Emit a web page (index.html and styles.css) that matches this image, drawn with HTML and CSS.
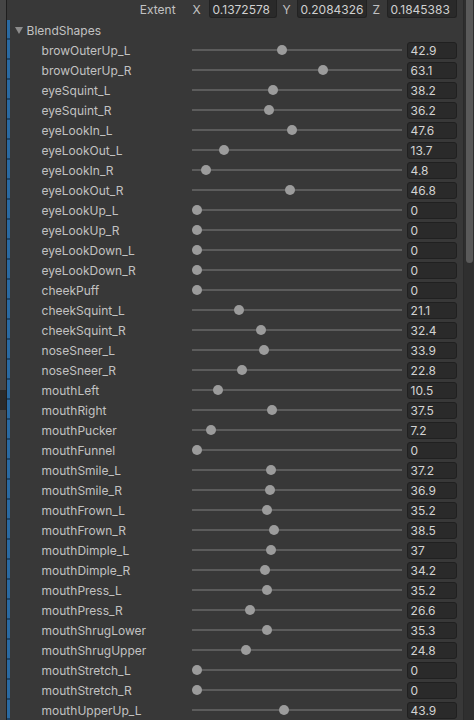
FILE: index.html
```html
<!DOCTYPE html>
<html>
<head>
<meta charset="utf-8">
<link rel="stylesheet" href="styles.css">
</head>
<body>
<div class="page">
  <div class="side"><div class="side-dark"></div></div>
  <div class="divider"></div>
  <div class="main">
    <div class="extent">
      <span class="ext-label">Extent</span>
      <span class="axis axis-first">X</span><span class="efield efield-first">0.1372578</span>
      <span class="axis">Y</span><span class="efield">0.2084326</span>
      <span class="axis">Z</span><span class="efield">0.1845383</span>
    </div>
    <div class="group">
      <div class="bar"></div>
      <div class="rows">
        <div class="header"><span class="tri"></span><span>BlendShapes</span></div>
        <div class="row"><span class="label">browOuterUp_L</span><div class="slider" style="--v:42.9"><i></i></div><span class="field">42.9</span></div>
        <div class="row"><span class="label">browOuterUp_R</span><div class="slider" style="--v:63.1"><i></i></div><span class="field">63.1</span></div>
        <div class="row"><span class="label">eyeSquint_L</span><div class="slider" style="--v:38.2"><i></i></div><span class="field">38.2</span></div>
        <div class="row"><span class="label">eyeSquint_R</span><div class="slider" style="--v:36.2"><i></i></div><span class="field">36.2</span></div>
        <div class="row"><span class="label">eyeLookIn_L</span><div class="slider" style="--v:47.6"><i></i></div><span class="field">47.6</span></div>
        <div class="row"><span class="label">eyeLookOut_L</span><div class="slider" style="--v:13.7"><i></i></div><span class="field">13.7</span></div>
        <div class="row"><span class="label">eyeLookIn_R</span><div class="slider" style="--v:4.8"><i></i></div><span class="field">4.8</span></div>
        <div class="row"><span class="label">eyeLookOut_R</span><div class="slider" style="--v:46.8"><i></i></div><span class="field">46.8</span></div>
        <div class="row"><span class="label">eyeLookUp_L</span><div class="slider" style="--v:0"><i></i></div><span class="field">0</span></div>
        <div class="row"><span class="label">eyeLookUp_R</span><div class="slider" style="--v:0"><i></i></div><span class="field">0</span></div>
        <div class="row"><span class="label">eyeLookDown_L</span><div class="slider" style="--v:0"><i></i></div><span class="field">0</span></div>
        <div class="row"><span class="label">eyeLookDown_R</span><div class="slider" style="--v:0"><i></i></div><span class="field">0</span></div>
        <div class="row"><span class="label">cheekPuff</span><div class="slider" style="--v:0"><i></i></div><span class="field">0</span></div>
        <div class="row"><span class="label">cheekSquint_L</span><div class="slider" style="--v:21.1"><i></i></div><span class="field">21.1</span></div>
        <div class="row"><span class="label">cheekSquint_R</span><div class="slider" style="--v:32.4"><i></i></div><span class="field">32.4</span></div>
        <div class="row"><span class="label">noseSneer_L</span><div class="slider" style="--v:33.9"><i></i></div><span class="field">33.9</span></div>
        <div class="row"><span class="label">noseSneer_R</span><div class="slider" style="--v:22.8"><i></i></div><span class="field">22.8</span></div>
        <div class="row"><span class="label">mouthLeft</span><div class="slider" style="--v:10.5"><i></i></div><span class="field">10.5</span></div>
        <div class="row"><span class="label">mouthRight</span><div class="slider" style="--v:37.5"><i></i></div><span class="field">37.5</span></div>
        <div class="row"><span class="label">mouthPucker</span><div class="slider" style="--v:7.2"><i></i></div><span class="field">7.2</span></div>
        <div class="row"><span class="label">mouthFunnel</span><div class="slider" style="--v:0"><i></i></div><span class="field">0</span></div>
        <div class="row"><span class="label">mouthSmile_L</span><div class="slider" style="--v:37.2"><i></i></div><span class="field">37.2</span></div>
        <div class="row"><span class="label">mouthSmile_R</span><div class="slider" style="--v:36.9"><i></i></div><span class="field">36.9</span></div>
        <div class="row"><span class="label">mouthFrown_L</span><div class="slider" style="--v:35.2"><i></i></div><span class="field">35.2</span></div>
        <div class="row"><span class="label">mouthFrown_R</span><div class="slider" style="--v:38.5"><i></i></div><span class="field">38.5</span></div>
        <div class="row"><span class="label">mouthDimple_L</span><div class="slider" style="--v:37"><i></i></div><span class="field">37</span></div>
        <div class="row"><span class="label">mouthDimple_R</span><div class="slider" style="--v:34.2"><i></i></div><span class="field">34.2</span></div>
        <div class="row"><span class="label">mouthPress_L</span><div class="slider" style="--v:35.2"><i></i></div><span class="field">35.2</span></div>
        <div class="row"><span class="label">mouthPress_R</span><div class="slider" style="--v:26.6"><i></i></div><span class="field">26.6</span></div>
        <div class="row"><span class="label">mouthShrugLower</span><div class="slider" style="--v:35.3"><i></i></div><span class="field">35.3</span></div>
        <div class="row"><span class="label">mouthShrugUpper</span><div class="slider" style="--v:24.8"><i></i></div><span class="field">24.8</span></div>
        <div class="row"><span class="label">mouthStretch_L</span><div class="slider" style="--v:0"><i></i></div><span class="field">0</span></div>
        <div class="row"><span class="label">mouthStretch_R</span><div class="slider" style="--v:0"><i></i></div><span class="field">0</span></div>
        <div class="row"><span class="label">mouthUpperUp_L</span><div class="slider" style="--v:43.9"><i></i></div><span class="field">43.9</span></div>
      </div>
    </div>
  </div>
  <div class="scroll"><div class="thumb"></div></div>
</div>
</body>
</html>
```
FILE: styles.css
```css
html, body {
  margin: 0;
  padding: 0;
  height: 720px;
  overflow: hidden;
  background: #383838;
}
body {
  font-family: Inter, "Noto Sans", sans-serif;
  font-size: 12px;
  color: #c2c2c2;
}
.page {
  display: flex;
  height: 720px;
  overflow: hidden;
}
.side {
  width: 6px;
  background: #454545;
  display: flex;
  flex-direction: column;
  padding-top: 390px;
}
.side-dark {
  height: 20px;
  background: #2b2b2b;
}
.divider {
  width: 1px;
  background: #1e1e1e;
}
.main {
  width: 455px;
  display: flex;
  flex-direction: column;
}
.extent {
  height: 20px;
  display: flex;
  align-items: flex-start;
  padding-left: 3px;
}
.ext-label {
  width: 183px;
  text-align: right;
  line-height: 20px;
  padding-right: 17px;
  box-sizing: border-box;
}
.axis {
  line-height: 20px;
  width: 14px;
  margin-left: 6px;
}
.axis-first {
  width: 16px;
  margin-left: 0;
}
.efield {
  width: 70px;
  height: 18px;
  box-sizing: border-box;
  background: #2a2a2a;
  border: 1px solid #222;
  border-top: 0;
  border-radius: 0 0 3px 3px;
  padding-left: 3px;
  line-height: 19px;
  color: #d0d0d0;
}
.efield-first {
  width: 68px;
}
.group {
  display: flex;
}
.bar {
  width: 3px;
  background: repeating-linear-gradient(to bottom, #2a6aa2 0 18px, #1d4468 18px 20px);
  background-position: 0 20px;
  background-color: #2a6aa2;
}
.rows {
  width: 452px;
  display: flex;
  flex-direction: column;
}
.header {
  height: 20px;
  display: flex;
  align-items: center;
  padding-left: 5px;
}
.tri {
  width: 0;
  height: 0;
  border-left: 4px solid transparent;
  border-right: 4px solid transparent;
  border-top: 7px solid #8c8c8c;
  margin-right: 4px;
}
.row {
  height: 20px;
  display: flex;
  align-items: center;
  padding-left: 32px;
}
.label {
  width: 150px;
  white-space: nowrap;
}
.slider {
  position: relative;
  width: 210px;
  height: 20px;
  margin-right: 5px;
}
.slider::before {
  content: "";
  position: absolute;
  left: 0;
  right: 0;
  top: 9px;
  height: 2px;
  background: #5c5c5c;
}
.slider i {
  position: absolute;
  top: 5px;
  left: calc(var(--v) * 2px);
  width: 10px;
  height: 10px;
  border-radius: 50%;
  background: #9c9c9c;
}
.field {
  width: 50px;
  height: 17px;
  box-sizing: border-box;
  background: #2a2a2a;
  border: 1px solid #202020;
  border-radius: 3px;
  padding-left: 3px;
  line-height: 15px;
  color: #d2d2d2;
}
.scroll {
  margin-left: 1px;
  width: 12px;
  background: #2f2f2f;
  border-left: 1px solid #2a2a2a;
  padding-left: 2px;
  box-sizing: border-box;
}
.thumb {
  width: 7px;
  height: 263px;
  background: #5a5a5a;
  border-radius: 0 0 4px 4px;
}
```
